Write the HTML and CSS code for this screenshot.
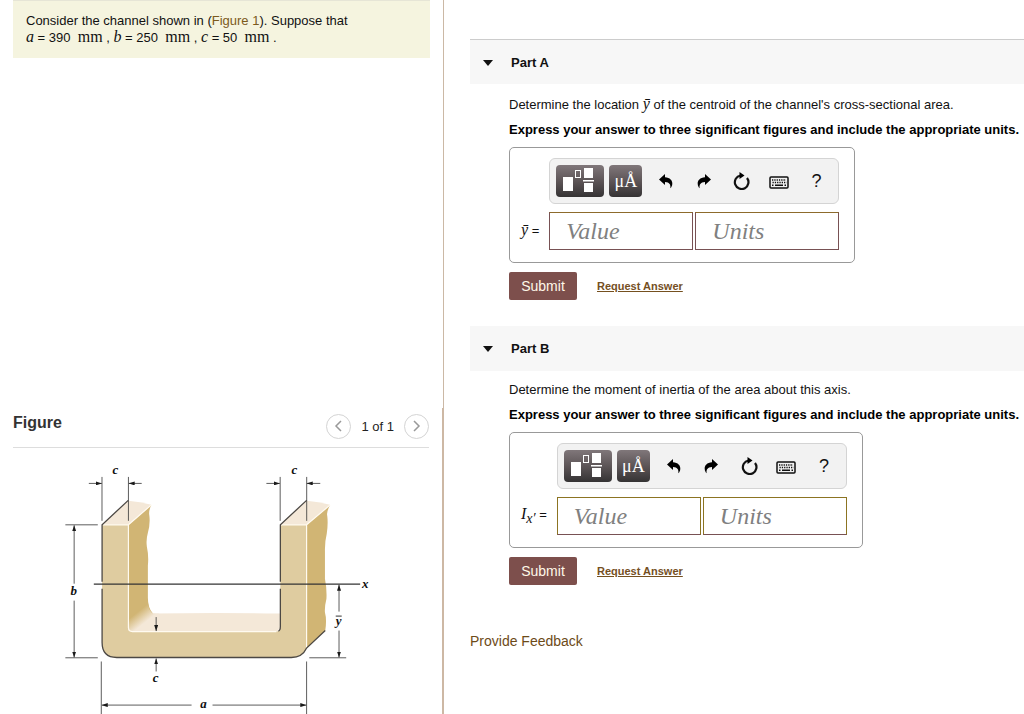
FILE: index.html
```html
<!DOCTYPE html>
<html lang="en">
<head>
<meta charset="utf-8">
<meta name="viewport" content="width=device-width, initial-scale=1">
<title>Centroid of a channel</title>
<link rel="stylesheet" href="styles.css">
</head>
<body>
<svg class="defs" width="0" height="0" aria-hidden="true">
  <defs>
    <symbol id="icon-templates" viewBox="0 0 48 32">
      <rect x="7" y="12" width="10" height="14" fill="#fff"/>
      <rect x="19.500" y="5.500" width="5" height="7" fill="none" stroke="#fff"/>
      <rect x="28" y="3" width="9" height="10" fill="#fff"/>
      <rect x="27" y="15" width="11" height="1.500" fill="#fff"/>
      <rect x="28" y="18" width="9" height="9" fill="#fff"/>
    </symbol>
    <symbol id="icon-undo" viewBox="0 0 16 16">
      <path d="M1 6.500 7 1v3.200c5 .3 7.500 3.200 7.300 6.500-.1 2-.8 3.400-2 4.600.6-3.500-.6-6-5.300-6.300v3z"/>
    </symbol>
    <symbol id="icon-redo" viewBox="0 0 16 16">
      <path d="M15 6.500 9 1v3.200c-5 .3-7.500 3.200-7.300 6.500.1 2 .8 3.400 2 4.600-.6-3.500.6-6 5.300-6.300v3z"/>
    </symbol>
    <symbol id="icon-reset" viewBox="0 0 18 18">
      <path d="M8.500 3.500A6.800 6.800 0 1 0 15 6" fill="none" stroke="#111" stroke-width="2.200"/>
      <path d="M7.500 0 12.500 3.500 7.500 7z"/>
    </symbol>
    <symbol id="icon-keyboard" viewBox="0 0 20 13">
      <rect x="1" y="1" width="18" height="11" rx="1" fill="none" stroke="#111" stroke-width="1.500"/>
      <path d="M3 4h14M3.500 6.500h14" fill="none" stroke="#111" stroke-width="1.400" stroke-dasharray="1.300 1"/>
      <path d="M3 9.300h1.500M6 9.300h8M15.500 9.300H17" fill="none" stroke="#111" stroke-width="1.400"/>
    </symbol>
  </defs>
</svg>

<div class="page">
  <div class="left">
    <section class="intro">
      <div class="problem">
        Consider the channel shown in (<a class="figure-link" href="#figure">Figure 1</a>). Suppose that<br>
        <i class="math">a</i> = 390 &nbsp;<span class="math">mm</span> , <i class="math">b</i> = 250 &nbsp;<span class="math">mm</span> , <i class="math">c</i> = 50 &nbsp;<span class="math">mm</span> .
      </div>
    </section>
    <section class="figure" id="figure">
      <header class="figure-header">
        <h2 class="figure-title">Figure</h2>
        <nav class="pager" aria-label="Figures">
          <button class="pager-button" type="button" aria-label="Previous figure"><svg width="9" height="12" viewBox="0 0 9 12"><path d="M7 1 2 6l5 5"/></svg></button>
          <span class="pager-count">1 of 1</span>
          <button class="pager-button" type="button" aria-label="Next figure"><svg width="9" height="12" viewBox="0 0 9 12"><path d="m2 1 5 5-5 5"/></svg></button>
        </nav>
      </header>
      <svg class="drawing" viewBox="13 447 417 267" role="img" aria-label="Channel cross-section with dimensions a, b and c">
        <defs>
          <marker id="tip" viewBox="0 0 6 4" refX="6" refY="2" markerWidth="6" markerHeight="4" markerUnits="userSpaceOnUse" orient="auto-start-reverse"><path d="M0 0 6 2 0 4z" fill="#1a1a1a"/></marker>
          <linearGradient id="fillet" gradientUnits="userSpaceOnUse" x1="136" y1="613" x2="144" y2="623"><stop offset="0" stop-color="#d1b574"/><stop offset="1" stop-color="#f4e8d8"/></linearGradient>
        </defs>
        <!-- far faces -->
        <path d="M148 609q2 4 6 4 60-1 127 0v14l-3 4H131z" fill="#f4e8d8"/>
        <path d="M128.700 524 151.700 504q-3 6-2 11 1 8-1.500 17-2 7-1 14 2 9 1 19v32q0 10 5 16L133 631h-4.300z" fill="#d1b574"/>
        <path d="M128.700 619 148.200 602q.5 8 5.300 11h6L140 631h-11.300z" fill="url(#fillet)"/>
        <path d="M307.300 524 331 504q-4 7-3 11 1 8-.5 18-2 8-1.800 17v28q2 10 1.500 20-2 8-1.500 14 2 7 .3 18L307.300 648z" fill="#d1b574"/>
        <!-- cut ends -->
        <path d="M102.300 524 128.500 500q12 1 23.200 4l-23 20z" fill="#f4e8d8"/>
        <path d="M281 524 307.300 500q12 1 23.700 4l-23.700 20z" fill="#f4e8d8"/>
        <!-- front face -->
        <path d="M102.300 524h26.400v103q0 4 4 4H277q4 0 4-5V524h26.300v124q-4 9-15 9H117q-14.700 0-14.700-15z" fill="#dfcca0"/>
        <path d="M103 524h25.700v103q0 4 4 4H277M281.500 524h25.800v123M128.700 524l23-20M307.300 524l23.700-20" fill="none" stroke="#fffaf0" stroke-width="1.200"/>
        <path d="M128.500 499.500 102.300 524v57M102.300 588v54q0 15 14.700 15H292q11 0 15.300-9.500L326 630M307.300 499.500 281 524v57M281 588v38q0 4-2 4.500" fill="none" stroke="#4c4844" stroke-width="1.300"/>
        <!-- centroid axis and dimensions -->
        <g fill="none" stroke="#333" stroke-width=".8">
          <path d="M94 583.500H361" stroke-width="1.200"/>
          <path d="M102.200 476v44M128.700 476v44M280.800 476v44M307.400 476v44M65.500 524H98M65.500 657.300H98M310 657.300h37M101.500 661v53M307.300 661v53"/>
          <g marker-end="url(#tip)">
            <path d="M89 482.500h13"/><path d="M142 482.500h-13"/>
            <path d="M267 482.500h13.500"/><path d="M321 482.500h-13.500"/>
            <path d="M74.300 583v-58.500"/><path d="M74.300 600v57"/>
            <path d="M339.800 611v-27"/><path d="M339.800 630v27"/>
            <path d="M156.500 616.500v14"/><path d="M156.500 671v-13"/>
            <path d="M192 704.700h-90"/><path d="M213 704.700h94"/>
          </g>
          <path d="M336.500 615.500h6" stroke-width="1"/>
        </g>
        <g class="dimension">
          <text x="115.500" y="473">c</text>
          <text x="295" y="473">c</text>
          <text x="74" y="594">b</text>
          <text x="366" y="587">x</text>
          <text x="339.500" y="624">y</text>
          <text x="156" y="682">c</text>
          <text x="204" y="708">a</text>
        </g>
      </svg>
    </section>
  </div>

  <main class="right">
    <section class="part part-a">
      <button class="part-header" type="button" aria-expanded="true"><span class="caret"></span>Part A</button>
      <div class="part-body">
        <p class="question">Determine the location <i class="math">ȳ</i> of the centroid of the channel's cross-sectional area.</p>
        <p class="instruction">Express your answer to three significant figures and include the appropriate units.</p>
        <form class="answer">
          <div class="answer-box">
            <div class="toolbar" role="toolbar" aria-label="Math tools">
              <button class="key key-wide" type="button" aria-label="Templates"><svg width="48" height="32"><use href="#icon-templates"/></svg></button>
              <button class="key" type="button" aria-label="Units">μÅ</button>
              <button class="tool" type="button" aria-label="Undo"><svg width="16" height="16"><use href="#icon-undo"/></svg></button>
              <button class="tool" type="button" aria-label="Redo"><svg width="16" height="16"><use href="#icon-redo"/></svg></button>
              <button class="tool" type="button" aria-label="Reset"><svg width="18" height="18"><use href="#icon-reset"/></svg></button>
              <button class="tool" type="button" aria-label="Keyboard shortcuts"><svg class="keyboard" width="20" height="13"><use href="#icon-keyboard"/></svg></button>
              <button class="tool" type="button" aria-label="Help">?</button>
            </div>
            <label class="quantity" for="value-a"><i class="math">ȳ</i> =</label>
            <input class="field" id="value-a" type="text" placeholder="Value">
            <input class="field" type="text" placeholder="Units" aria-label="Units">
          </div>
          <div class="actions">
            <button class="submit" type="button">Submit</button>
            <a class="request" href="#">Request Answer</a>
          </div>
        </form>
      </div>
    </section>

    <section class="part part-b">
      <button class="part-header" type="button" aria-expanded="true"><span class="caret"></span>Part B</button>
      <div class="part-body">
        <p class="question">Determine the moment of inertia of the area about this axis.</p>
        <p class="instruction">Express your answer to three significant figures and include the appropriate units.</p>
        <form class="answer">
          <div class="answer-box">
            <div class="toolbar" role="toolbar" aria-label="Math tools">
              <button class="key key-wide" type="button" aria-label="Templates"><svg width="48" height="32"><use href="#icon-templates"/></svg></button>
              <button class="key" type="button" aria-label="Units">μÅ</button>
              <button class="tool" type="button" aria-label="Undo"><svg width="16" height="16"><use href="#icon-undo"/></svg></button>
              <button class="tool" type="button" aria-label="Redo"><svg width="16" height="16"><use href="#icon-redo"/></svg></button>
              <button class="tool" type="button" aria-label="Reset"><svg width="18" height="18"><use href="#icon-reset"/></svg></button>
              <button class="tool" type="button" aria-label="Keyboard shortcuts"><svg class="keyboard" width="20" height="13"><use href="#icon-keyboard"/></svg></button>
              <button class="tool" type="button" aria-label="Help">?</button>
            </div>
            <label class="quantity" for="value-b"><i class="math">I<sub>x′</sub></i> =</label>
            <input class="field" id="value-b" type="text" placeholder="Value">
            <input class="field" type="text" placeholder="Units" aria-label="Units">
          </div>
          <div class="actions">
            <button class="submit" type="button">Submit</button>
            <a class="request" href="#">Request Answer</a>
          </div>
        </form>
      </div>
    </section>
    <a class="feedback" href="#">Provide Feedback</a>
  </main>
</div>
</body>
</html>
```

FILE: styles.css
```css
* {
  box-sizing: border-box;
}

body {
  margin: 0;
  background: #fff;
  color: #111;
  font: 13px/20px "Liberation Sans", Arial, sans-serif;
}

button,
input {
  margin: 0;
  padding: 0;
  border: 0;
  border-radius: 0;
  color: inherit;
  font: inherit;
}

h2,
p {
  margin: 0;
}

.defs {
  position: absolute;
}

.math {
  font-family: "Liberation Serif", "Times New Roman", serif;
  font-size: 16px;
  line-height: 1;
}

.page {
  display: grid;
  grid-template-columns: 444fr 580fr;
  min-height: 100vh;
}

/* Left column */
.left {
  display: flex;
  flex-direction: column;
}

.intro {
  flex: 1;
  padding: 0 13px;
  border-right: 1px solid #cbb8a5;
}

.problem {
  padding: 12px 12px 12px 13px;
  border-top: 1px solid #e6e5d6;
  background: #f5f4df;
  line-height: 16px;
}

.figure-link {
  color: #7c5a1c;
  text-decoration: none;
}

.figure {
  padding: 0 13px;
  border-right: 2px solid #cdb8a4;
}

.figure-header {
  display: flex;
  align-items: center;
  justify-content: space-between;
  height: 40px;
  padding-bottom: 2px;
  border-bottom: 1px solid #ddd;
}

.figure-title {
  padding-bottom: 6px;
  color: #333;
  font-size: 16px;
}

.pager {
  display: flex;
  align-items: center;
  gap: 10px;
}

.pager-button {
  display: grid;
  place-items: center;
  width: 25px;
  height: 25px;
  border: 1px solid #d4d4d4;
  border-radius: 50%;
  background: #fff;
}

.pager-button path {
  fill: none;
  stroke: #999;
  stroke-width: 1.5px;
}

.pager-count {
  padding-top: 2px;
  color: #222;
  font-size: 13px;
}

.drawing {
  display: block;
  width: 100%;
}

.dimension {
  fill: #111;
  font: italic bold 13px "Liberation Serif", "Times New Roman", serif;
  text-anchor: middle;
}

/* Right column */
.right {
  padding: 39px 0 0 26px;
}

.part-header {
  display: flex;
  align-items: center;
  gap: 18px;
  width: 100%;
  height: 45px;
  padding-left: 13px;
  background: #f7f7f7;
  font-size: 13px;
  font-weight: bold;
  text-align: left;
}

.part-a .part-header {
  padding-top: 2px;
  border-top: 1px solid #ccc;
}

.caret {
  border: 5px solid transparent;
  border-top: 6px solid #111;
  border-bottom: 0;
}

.part-body {
  padding: 11px 0 26px 39px;
}

.part-b .part-body {
  padding-top: 9px;
}

.question {
  height: 20px;
  margin-bottom: 5px;
}

.instruction {
  margin-bottom: 7px;
  color: #000;
  font-weight: bold;
  white-space: nowrap;
}

.answer-box {
  display: grid;
  grid-template-columns: auto 144px 144px;
  gap: 8px 2px;
  width: max-content;
  padding: 10px 15px 12px 11px;
  border: 1px solid #999;
  border-radius: 5px;
}

.toolbar {
  display: flex;
  grid-column: 2 / 4;
  align-items: center;
  height: 46px;
  padding: 0 3px 0 6px;
  border: 1px solid #d4d4d4;
  border-radius: 6px;
  background: #f2f2f2;
}

.key {
  display: grid;
  place-items: center;
  width: 33px;
  height: 32px;
  margin-right: 5px;
  border-radius: 4px;
  background: linear-gradient(#80777a, #5d5557 50%, #353334);
  color: #fff;
  font: 18px/32px "Liberation Serif", "Times New Roman", serif;
}

.key-wide {
  width: 48px;
}

.tool {
  display: grid;
  flex: 1;
  place-items: center;
  height: 32px;
  background: none;
  font-size: 18px;
}

.keyboard {
  margin-top: 3px;
}

.quantity {
  align-self: center;
  padding-right: 8px;
}

.quantity sub {
  font-size: 14px;
  line-height: 1;
}

.field {
  width: 100%;
  height: 38px;
  padding: 0 16px;
  border: 1px solid #785154;
  border-top-color: #8d6b2c;
  background: #fff;
  font: italic 24px "Liberation Serif", "Times New Roman", serif;
}

.part-b .field {
  border-color: #8c7422;
  border-bottom-color: #785154;
}

.field::placeholder {
  color: #808080;
  opacity: 1;
}

.actions {
  display: flex;
  align-items: center;
  gap: 20px;
  margin-top: 9px;
}

.submit {
  width: 68px;
  height: 28px;
  border-radius: 2px;
  background: #7d4f4c;
  color: #fff8e8;
  font-size: 14px;
}

.request {
  color: #75501f;
  font-size: 11px;
  font-weight: bold;
}

.feedback {
  display: inline-block;
  margin-top: 20px;
  color: #6d4b18;
  font-size: 14px;
  text-decoration: none;
}
```
